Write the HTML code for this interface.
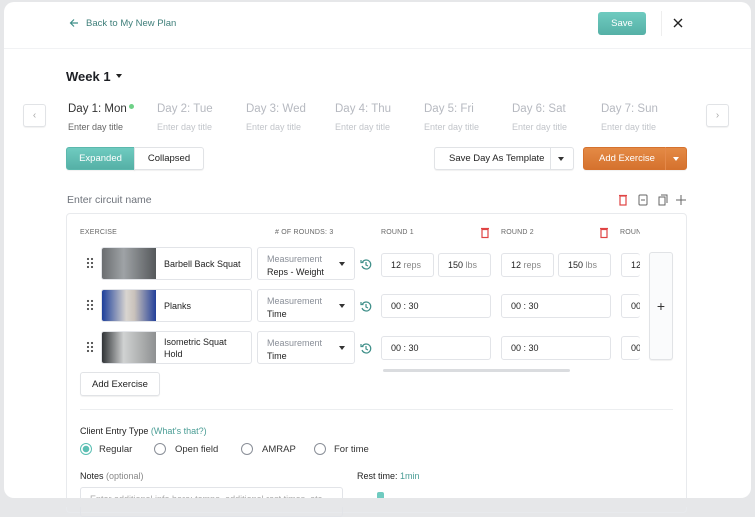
<!DOCTYPE html>
<html><head><style>
*{box-sizing:border-box;margin:0;padding:0}
body{width:755px;height:507px;background:#e6e7e9;font-family:"Liberation Sans",sans-serif;position:relative;overflow:hidden;color:#222}
.a{position:absolute}
.card{left:4px;top:2px;width:747px;height:496px;background:#fff;border-radius:10px;overflow:hidden}
.btn{position:absolute;border:1px solid #e1e3e6;border-radius:3px;background:#fff;font-size:9.5px;display:flex;align-items:center;justify-content:center;box-shadow:0 1px 1px rgba(0,0,0,.06)}
.day{position:absolute;top:103px;font-size:11.5px;color:#b6b9c0}
.day i{display:block;font-style:normal;font-size:9px;color:#c2c5ca;margin-top:7px}
.hd{position:absolute;top:229px;font-size:7px;color:#666;letter-spacing:.2px}
.box{position:absolute;border:1px solid #e2e4e8;border-radius:3px;background:#fff;font-size:9px;display:flex;align-items:center;padding-left:9px}
.meas{position:absolute;border:1px solid #e2e4e8;border-radius:3px;font-size:9px;padding:5px 0 0 9px;line-height:13px}
.meas span{color:#8a8f98}
.meas:after{content:"";position:absolute;right:9px;top:14px;border:3px solid transparent;border-top:4px solid #333}
.thumb{position:absolute;width:54px;height:31px;left:0;top:0;border-radius:2px 0 0 2px}
.rad{position:absolute;top:443px;width:12px;height:12px;border:1px solid #8a8f98;border-radius:50%}
.lbl{position:absolute;top:444px;font-size:9.5px;color:#333}
</style></head><body>
<div class="a card">
</div>
<!-- header -->
<svg class="a" style="left:69px;top:18px" width="10" height="10" viewBox="0 0 10 10"><path d="M9 5H1.5M5 1.5L1.5 5 5 8.5" stroke="#3f8f89" stroke-width="1.2" fill="none"/></svg>
<div class="a" style="left:86px;top:18px;font-size:9.5px;color:#3f7f7a">Back to My New Plan</div>
<div class="a" style="left:598px;top:12px;width:48px;height:23px;border-radius:3px;background:linear-gradient(#6fcbc0,#55b0a6);color:#fff;font-size:9.5px;display:flex;align-items:center;justify-content:center">Save</div>
<div class="a" style="left:661px;top:11px;width:1px;height:25px;background:#eee"></div>
<svg class="a" style="left:673px;top:18px" width="10" height="10"><path d="M1 1L9 9M9 1L1 9" stroke="#222" stroke-width="1.4"/></svg>
<div class="a" style="left:4px;top:48px;width:747px;height:1px;background:#f1f2f4"></div>
<div class="a" style="left:66px;top:69px;font-size:13px;font-weight:bold;color:#1d1f24">Week 1</div>
<div class="a" style="left:116px;top:74px;border:3px solid transparent;border-top:4px solid #222"></div>
<div class="btn" style="left:23px;top:104px;width:23px;height:23px;color:#aaa;font-size:10px">‹</div>
<div class="btn" style="left:706px;top:104px;width:23px;height:23px;color:#aaa;font-size:10px">›</div>
<div class="day" style="left:68px;color:#333">Day 1: Mon<i style="color:#666">Enter day title</i></div>
<div class="a" style="left:129px;top:104px;width:5px;height:5px;border-radius:50%;background:#6ed187"></div>
<div class="day" style="left:157px">Day 2: Tue<i>Enter day title</i></div>
<div class="day" style="left:246px">Day 3: Wed<i>Enter day title</i></div>
<div class="day" style="left:335px">Day 4: Thu<i>Enter day title</i></div>
<div class="day" style="left:424px">Day 5: Fri<i>Enter day title</i></div>
<div class="day" style="left:512px">Day 6: Sat<i>Enter day title</i></div>
<div class="day" style="left:601px">Day 7: Sun<i>Enter day title</i></div>
<div class="btn" style="left:66px;top:147px;width:69px;height:23px;background:linear-gradient(#6fcbc0,#55b0a6);color:#fff;border-color:#5bb8ad;border-radius:3px 0 0 3px">Expanded</div>
<div class="btn" style="left:134px;top:147px;width:70px;height:23px;border-radius:0 3px 3px 0">Collapsed</div>
<div class="btn" style="left:434px;top:147px;width:140px;height:23px;justify-content:flex-start;padding-left:14px">Save Day As Template</div>
<div class="a" style="left:550px;top:147px;width:1px;height:23px;background:#e1e3e6"></div>
<div class="a" style="left:558px;top:157px;border:3px solid transparent;border-top:4px solid #333"></div>
<div class="btn" style="left:583px;top:147px;width:104px;height:23px;background:linear-gradient(#e48a45,#d5722e);border-color:#d5722e;color:#fff;justify-content:flex-start;padding-left:15px">Add Exercise</div>
<div class="a" style="left:665px;top:147px;width:1px;height:23px;background:#e5894a"></div>
<div class="a" style="left:673px;top:157px;border:3px solid transparent;border-top:4px solid #fff"></div>
<div class="a" style="left:67px;top:194px;font-size:10.5px;color:#6e737b">Enter circuit name</div>
<svg class="a" style="left:618px;top:194px" width="70" height="12">
<rect x="2" y="2" width="6" height="9" stroke="#e04444" fill="none" stroke-width="1.2"/><path d="M1 1.5h8" stroke="#e04444" stroke-width="1.2"/>
<rect x="21" y="1" width="8" height="10" rx="1" stroke="#666" fill="none"/><path d="M23 6h4" stroke="#666"/>
<rect x="41" y="3" width="6" height="8" stroke="#666" fill="none"/><path d="M43 1h6v8" stroke="#666" fill="none"/>
<path d="M63 1v10M58 6h10" stroke="#666"/>
</svg>
<!-- card -->
<div class="a" style="left:66px;top:213px;width:621px;height:300px;border:1px solid #e8eaed;border-radius:4px"></div>
<div class="hd" style="left:80px">EXERCISE</div>
<div class="hd" style="left:275px"># OF ROUNDS: 3</div>
<div class="hd" style="left:381px">ROUND 1</div>
<div class="hd" style="left:501px">ROUND 2</div>
<div class="hd" style="left:620px;width:20px;overflow:hidden;white-space:nowrap">ROUND 3</div>
<svg class="a" style="left:480px;top:227px" width="10" height="12"><rect x="2" y="2.5" width="6" height="8" stroke="#e04444" fill="none" stroke-width="1.2"/><path d="M1 1.5h8" stroke="#e04444" stroke-width="1.2"/></svg>
<svg class="a" style="left:599px;top:227px" width="10" height="12"><rect x="2" y="2.5" width="6" height="8" stroke="#e04444" fill="none" stroke-width="1.2"/><path d="M1 1.5h8" stroke="#e04444" stroke-width="1.2"/></svg>

<!-- rows -->
<div class="a" style="left:86px;top:257px;width:8px;height:12px;background:radial-gradient(circle,#555 1px,transparent 1.3px) 0 0/4px 4px"></div>
<div class="box" style="left:101px;top:247px;width:151px;height:33px;padding-left:62px">Barbell Back Squat</div>
<div class="thumb a" style="left:102px;top:248px;background:linear-gradient(90deg,#6a6d70,#9fa3a6 40%,#55585b)"></div>
<div class="meas" style="left:257px;top:247px;width:98px;height:33px"><span>Measurement</span><br>Reps - Weight</div>
<div class="box" style="left:381px;top:253px;width:53px;height:24px">12<span style="color:#888">&nbsp;reps</span></div>
<div class="box" style="left:438px;top:253px;width:53px;height:24px">150<span style="color:#888">&nbsp;lbs</span></div>
<div class="box" style="left:501px;top:253px;width:53px;height:24px">12<span style="color:#888">&nbsp;reps</span></div>
<div class="box" style="left:558px;top:253px;width:53px;height:24px">150<span style="color:#888">&nbsp;lbs</span></div>
<div class="box" style="left:621px;top:253px;width:19px;height:24px;border-right:none;overflow:hidden">12</div>

<div class="a" style="left:86px;top:299px;width:8px;height:12px;background:radial-gradient(circle,#555 1px,transparent 1.3px) 0 0/4px 4px"></div>
<div class="box" style="left:101px;top:289px;width:151px;height:33px;padding-left:62px">Planks</div>
<div class="thumb a" style="left:102px;top:290px;background:linear-gradient(90deg,#1d3f9a,#d9d5d0 45%,#c9c2bb 60%,#23409a)"></div>
<div class="meas" style="left:257px;top:289px;width:98px;height:33px"><span>Measurement</span><br>Time</div>
<div class="box" style="left:381px;top:294px;width:110px;height:24px">00 : 30</div>
<div class="box" style="left:501px;top:294px;width:110px;height:24px">00 : 30</div>
<div class="box" style="left:621px;top:294px;width:19px;height:24px;border-right:none;overflow:hidden">00</div>

<div class="a" style="left:86px;top:341px;width:8px;height:12px;background:radial-gradient(circle,#555 1px,transparent 1.3px) 0 0/4px 4px"></div>
<div class="box" style="left:101px;top:331px;width:151px;height:33px;padding-left:62px;line-height:12px">Isometric Squat<br>Hold</div>
<div class="thumb a" style="left:102px;top:332px;background:linear-gradient(90deg,#303336,#d0d2d2 40%,#8e9091)"></div>
<div class="meas" style="left:257px;top:331px;width:98px;height:33px"><span>Measurement</span><br>Time</div>
<div class="box" style="left:381px;top:336px;width:110px;height:24px">00 : 30</div>
<div class="box" style="left:501px;top:336px;width:110px;height:24px">00 : 30</div>
<div class="box" style="left:621px;top:336px;width:19px;height:24px;border-right:none;overflow:hidden">00</div>

<svg class="a" style="left:360px;top:258px" width="12" height="110">
<g fill="none" stroke="#3f8f89" stroke-width="1.2"><path d="M2.5 4A4.5 4.5 0 1 1 2 8M1 2v2.5h2.5M6 4v3l2 1"/>
<path transform="translate(0,42)" d="M2.5 4A4.5 4.5 0 1 1 2 8M1 2v2.5h2.5M6 4v3l2 1"/>
<path transform="translate(0,84)" d="M2.5 4A4.5 4.5 0 1 1 2 8M1 2v2.5h2.5M6 4v3l2 1"/></g></svg>

<div class="btn" style="left:649px;top:252px;width:24px;height:108px;background:#fafbfc;font-size:14px;color:#333">+</div>
<div class="a" style="left:383px;top:369px;width:187px;height:3px;border-radius:2px;background:#dadcdf"></div>
<div class="btn" style="left:80px;top:372px;width:80px;height:24px">Add Exercise</div>
<div class="a" style="left:80px;top:409px;width:593px;height:1px;background:#eceef0"></div>
<div class="a" style="left:80px;top:426px;font-size:9px">Client Entry Type <span style="color:#4a9d95">(What's that?)</span></div>
<div class="rad" style="left:80px;border-color:#5bbfb3;background:radial-gradient(circle,#5bbfb3 3px,#fff 3.5px)"></div>
<div class="lbl" style="left:99px">Regular</div>
<div class="rad" style="left:154px"></div><div class="lbl" style="left:175px">Open field</div>
<div class="rad" style="left:241px"></div><div class="lbl" style="left:262px">AMRAP</div>
<div class="rad" style="left:314px"></div><div class="lbl" style="left:334px">For time</div>
<div class="a" style="left:80px;top:471px;font-size:9px">Notes <span style="color:#888">(optional)</span></div>
<div class="a" style="left:357px;top:471px;font-size:9px">Rest time: <span style="color:#4a9d95">1min</span></div>
<div class="a" style="left:80px;top:487px;width:263px;height:30px;border:1px solid #e2e4e8;border-radius:3px;font-size:9px;color:#aaa;padding:6px 9px;white-space:nowrap;overflow:hidden">Enter additional info here: tempo, additional rest times, etc.</div>
<div class="a" style="left:377px;top:492px;width:7px;height:10px;border-radius:2px;background:#6fcbc0"></div>
<div class="a" style="left:0;top:498px;width:755px;height:9px;background:#e6e7e9"></div>
</body></html>
